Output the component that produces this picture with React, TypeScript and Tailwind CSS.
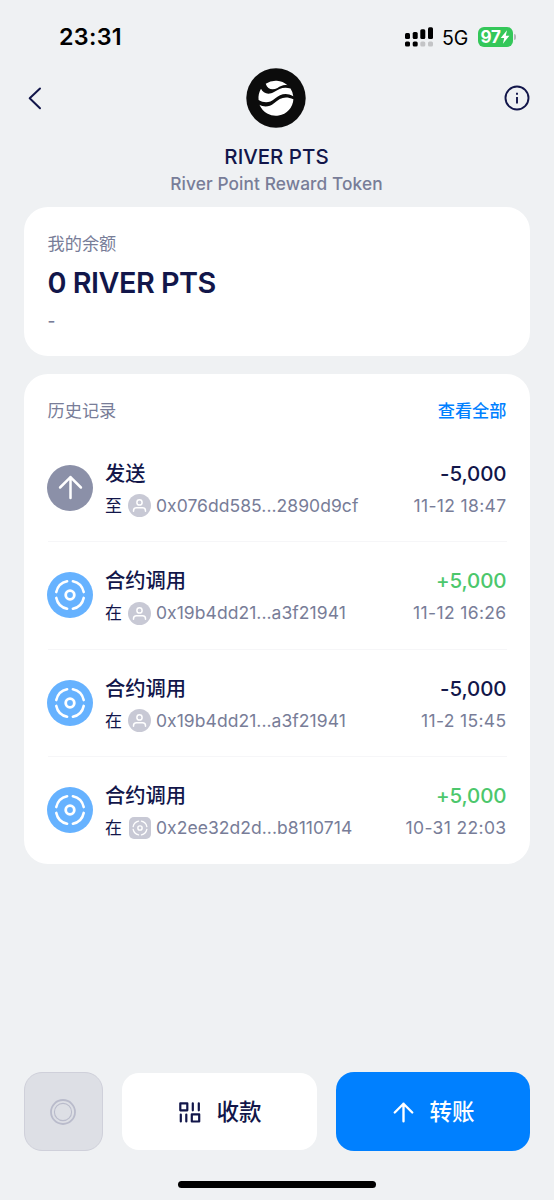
type AddressKind = "account" | "contract";

interface Transaction {
  type: "send" | "call";
  title: string;
  prefix: string;
  kind: AddressKind;
  address: string;
  amount: string;
  time: string;
}

const transactions: Transaction[] = [
  { type: "send", title: "发送", prefix: "至", kind: "account", address: "0x076dd585...2890d9cf", amount: "-5,000", time: "11-12 18:47" },
  { type: "call", title: "合约调用", prefix: "在", kind: "account", address: "0x19b4dd21...a3f21941", amount: "+5,000", time: "11-12 16:26" },
  { type: "call", title: "合约调用", prefix: "在", kind: "account", address: "0x19b4dd21...a3f21941", amount: "-5,000", time: "11-2 15:45" },
  { type: "call", title: "合约调用", prefix: "在", kind: "contract", address: "0x2ee32d2d...b8110714", amount: "+5,000", time: "10-31 22:03" },
];

function SignalIcon() {
  return (
    <svg width="28" height="20" viewBox="0 0 28 20">
      <rect x="0" y="6" width="5" height="6" rx="1.5" />
      <rect x="7.7" y="5" width="5" height="7" rx="1.5" />
      <rect x="15.3" y="2.3" width="5" height="9.7" rx="1.5" />
      <rect x="23" y="0.3" width="5" height="11.7" rx="1.5" />
      <rect x="0" y="14.4" width="5" height="5" rx="1.5" />
      <rect x="7.7" y="14.4" width="5" height="5" rx="1.5" />
      <rect x="15.3" y="14.4" width="5" height="5" rx="1.5" fill="#c3c4c6" />
      <rect x="23" y="14.4" width="5" height="5" rx="1.5" fill="#c3c4c6" />
    </svg>
  );
}

function StatusBar() {
  return (
    <div className="flex h-[68px] items-start justify-between pt-[23px] pr-[38px] pl-[59px] text-black">
      <span className="text-[23.3px] leading-[28px] font-semibold tracking-[0.3px]">23:31</span>
      <div className="flex h-[28px] items-center">
        <SignalIcon />
        <span className="ml-[9px] w-[27px] pt-[2px] text-[19.5px] leading-[28px] tracking-[-0.2px]">5G</span>
        <div className="ml-[9px] flex h-5 w-[35px] items-center justify-center rounded-[6px] bg-[#34c759] text-[17px] leading-5 font-bold text-white">
          <span className="tracking-[-0.4px]">97</span>
          <svg width="10" height="14" viewBox="0 0 9 14" fill="currentColor">
            <path d="M6.5 0.3 0.2 8h3.5L2.4 13.7 8.9 5.8H5.3z" />
          </svg>
        </div>
        <div className="ml-px h-[6px] w-[2px] rounded-r-full bg-[#b4b6b9]" />
      </div>
    </div>
  );
}

function RiverLogo() {
  return (
    <svg width="60" height="60" viewBox="0 0 60 60">
      <circle cx="30" cy="30" r="29.7" fill="#0c0c0c" />
      <g fill="#fff">
        <path d="M19.7 15.8A17.6 17.6 0 0 1 41.5 17.3C37.5 16.4 34.5 18 31.5 20 26.5 22.5 21.5 21.5 19.7 15.8z" />
        <path d="M15 20.8C17 25.8 23 27 28 24 33 20.8 38 18.3 44.5 20.6A17.6 17.6 0 0 1 47.3 28.2C40 24 34 26.3 29 30.5 23 35.5 18 35 12.6 32A17.6 17.6 0 0 1 15 20.8z" />
        <path d="M13.5 36.8C18 39.5 23.5 39 28 35.3 34 30 39 27.5 47.4 31.3A17.6 17.6 0 0 1 13.5 36.8z" />
      </g>
    </svg>
  );
}

function ArrowUp({ size, stroke }: { size: number; stroke: number }) {
  return (
    <svg width={size} height={size} viewBox="0 0 24 24" fill="none" stroke="currentColor" strokeWidth={stroke} strokeLinecap="round" strokeLinejoin="round">
      <path d="M12 22V2M2 12 12 2l10 10" />
    </svg>
  );
}

function TargetIcon({ size }: { size: number }) {
  return (
    <svg width={size} height={size} viewBox="0 0 32 32" fill="none" stroke="currentColor" strokeWidth="2.6" strokeLinecap="round">
      <circle cx="16" cy="16" r="4.3" strokeWidth="2.8" />
      <path d="M18.9 2.3A14 14 0 0 1 29.7 13.1M29.7 18.9A14 14 0 0 1 18.9 29.7M13.1 29.7A14 14 0 0 1 2.3 18.9M2.3 13.1A14 14 0 0 1 13.1 2.3" />
    </svg>
  );
}

function AddressIcon({ kind }: { kind: AddressKind }) {
  if (kind === "contract") {
    return (
      <div className="flex size-[22px] items-center justify-center rounded-[5px] bg-[#c8c9d5] text-white">
        <TargetIcon size={16} />
      </div>
    );
  }
  return (
    <div className="flex size-[23px] items-center justify-center rounded-full bg-[#c8c9d5]">
      <svg width="15" height="15" viewBox="0 0 15 15" fill="none" stroke="#fff" strokeWidth="1.5" strokeLinecap="round">
        <circle cx="7.5" cy="4.4" r="2.6" />
        <path d="M1.5 13.2v-.5c0-1.8 1.2-2.9 3-2.9h6c1.8 0 3 1.1 3 2.9v.5" />
      </svg>
    </div>
  );
}

function TransactionRow({ tx, last }: { tx: Transaction; last: boolean }) {
  return (
    <div className={`flex h-[107.6px] items-center border-b ${last ? "border-transparent" : "border-[#f6f6f8]"}`}>
      <div className={`-ml-[0.5px] flex size-[46px] shrink-0 items-center justify-center rounded-full text-white ${tx.type === "send" ? "bg-[#8b90a8]" : "bg-[#66b2ff]"}`}>
        {tx.type === "send" ? <ArrowUp size={25} stroke={2.4} /> : <TargetIcon size={32} />}
      </div>
      <div className="ml-3 flex flex-1 flex-col gap-1 pt-1">
        <div className="flex h-7 items-center justify-between leading-7 font-medium">
          <span className="text-[20.3px] text-[#12164a]">{tx.title}</span>
          <span className={`text-[20.5px] tracking-[-0.1px] ${tx.amount.startsWith("+") ? "text-[#4cc76c]" : "text-[#12164a]"}`}>{tx.amount}</span>
        </div>
        <div className="flex h-7 items-center text-[17.5px] leading-7 text-[#787d98]">
          <span className="w-[23px] text-[17px] text-[#12164a]">{tx.prefix}</span>
          <div className="mr-[5px] flex w-[23px] justify-center">
            <AddressIcon kind={tx.kind} />
          </div>
          <span className="tracking-[0.05px]">{tx.address}</span>
          <span className="ml-auto tracking-[0.35px]">{tx.time}</span>
        </div>
      </div>
    </div>
  );
}

export default function App() {
  return (
    <div className="flex h-[1200px] w-[554px] flex-col overflow-hidden bg-[#eff1f3] font-['Inter','Noto_Sans_CJK_SC',sans-serif] text-[#12164a]">
      <StatusBar />

      {/* Token header */}
      <header className="flex h-[139px] items-start justify-between px-6">
        <svg className="mt-[18px]" width="24" height="24" viewBox="0 0 24 24" fill="none" stroke="currentColor" strokeWidth="2" strokeLinecap="round" strokeLinejoin="round">
          <path d="M16 2.5 5.7 12.3 16 22.2" />
        </svg>
        <div className="flex flex-col items-center">
          <RiverLogo />
          <h1 className="mt-[15.5px] ml-px text-[20.5px] leading-[26px] font-medium">RIVER PTS</h1>
          <p className="mt-px ml-px text-[17.3px] leading-[26px] font-medium tracking-[0.1px] text-[#787d98]">River Point Reward Token</p>
        </div>
        <svg className="mt-[17px]" width="26" height="26" viewBox="0 0 26 26" fill="none" stroke="currentColor" strokeWidth="1.9">
          <circle cx="13" cy="13" r="11.5" />
          <path d="M13 12v6.5M13 7.8v2" />
        </svg>
      </header>

      {/* Balance */}
      <section className="mx-6 h-[149px] rounded-[24px] bg-white px-[23.5px] pt-6">
        <p className="text-[17.2px] leading-[26px] text-[#787d98]">我的余额</p>
        <p className="mt-2 text-[28.8px] leading-[36px] font-semibold tracking-[-0.5px]">0 RIVER PTS</p>
        <p className="mt-[7px] text-[17px] leading-[26px] font-medium text-[#787d98]">-</p>
      </section>

      {/* History */}
      <section className="mx-6 mt-[18px] h-[490px] rounded-[24px] bg-white px-[23.5px]">
        <div className="flex h-[60.4px] items-center justify-between pt-[13px] text-[17.2px] leading-[26px]">
          <h2 className="text-[#787d98]">历史记录</h2>
          <button className="font-medium text-[#0080ff]">查看全部</button>
        </div>
        {transactions.map((tx, i) => (
          <TransactionRow key={i} tx={tx} last={i === transactions.length - 1} />
        ))}
      </section>

      {/* Actions */}
      <footer className="mt-auto flex flex-col items-center px-6 pb-3">
        <div className="flex w-full items-center text-[22.5px] leading-8 font-medium">
          <button className="flex size-[79px] items-center justify-center rounded-[18px] border border-[#cfd0da] bg-[#dddfe5] pr-px">
            <svg width="26" height="26" viewBox="0 0 26 26" fill="none" stroke="#b9bbcb">
              <circle cx="13" cy="13" r="12" strokeWidth="1.8" />
              <circle cx="13" cy="13" r="8.6" strokeWidth="1.1" />
            </svg>
          </button>
          <button className="ml-[19px] flex h-[77px] w-[195px] items-center justify-center gap-[15px] rounded-[17px] bg-white pt-px pl-[2px]">
            <svg width="22" height="21" viewBox="0 0 22 21" fill="none" stroke="currentColor" strokeWidth="2.2" strokeLinecap="round" strokeLinejoin="round">
              <path d="M1.3 1.3h7v7h-7zM12.8 12.3h7.4v7.2h-7.4zM13.8 1.3v7M19.8 1.3v7M1.8 12.5v7M7.3 12.5v7" />
            </svg>
            收款
          </button>
          <button className="ml-[19px] flex h-[79px] w-[194px] items-center justify-center gap-[15px] rounded-[18px] bg-[#0080ff] pt-px pl-[2px] text-white">
            <ArrowUp size={21} stroke={2.7} />
            转账
          </button>
        </div>
        <div className="mt-[30px] h-[7px] w-[198px] rounded-full bg-black" />
      </footer>
    </div>
  );
}
